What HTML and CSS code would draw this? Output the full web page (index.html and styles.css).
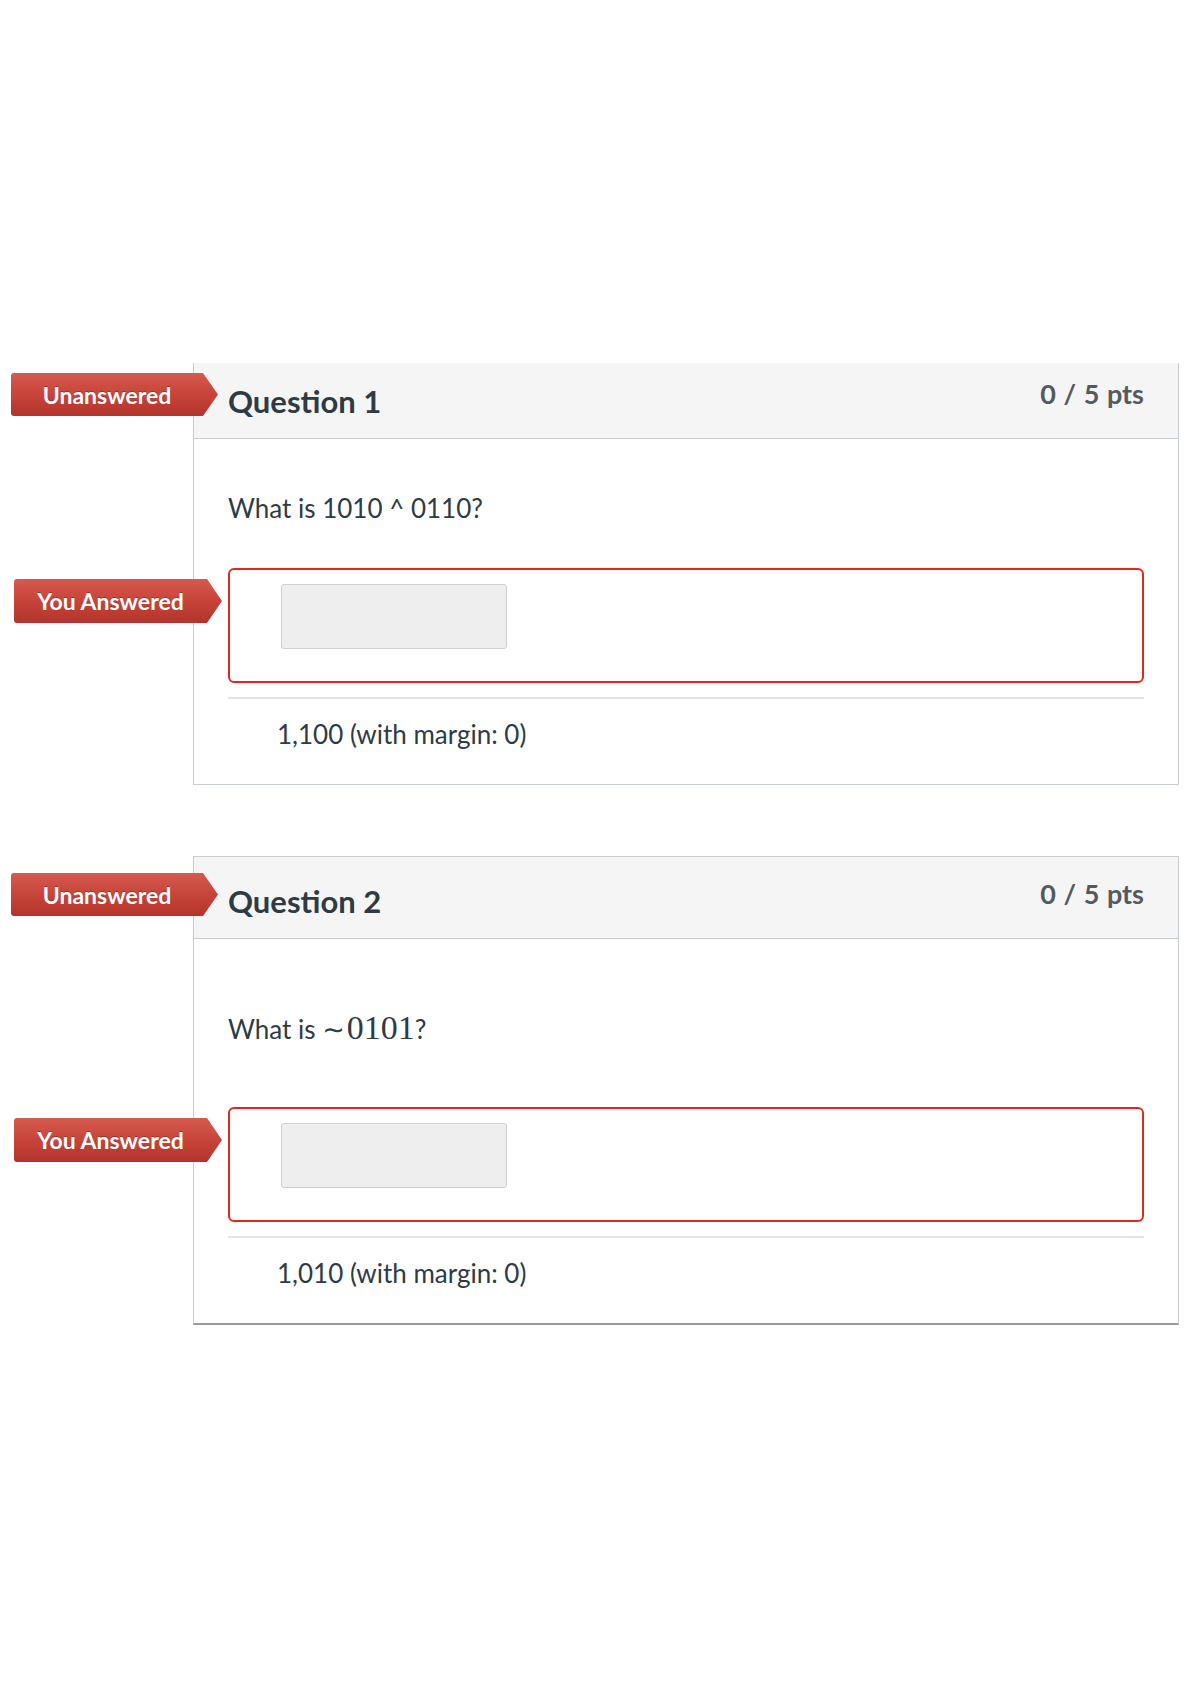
FILE: index.html
```html
<!DOCTYPE html>
<html lang="en">
<head>
<meta charset="utf-8">
<title>Quiz results</title>
<link rel="stylesheet" href="styles.css">
</head>
<body>
<main class="quiz">
  <section class="q-card q-card--first">
    <header class="q-header">
      <span class="badge badge--status">Unanswered</span>
      <h2 class="q-title">Question 1</h2>
      <div class="q-pts">0 / 5 pts</div>
    </header>
    <div class="q-body">
      <p class="q-text">What is 1010 ^ 0110?</p>
      <div class="answer-box">
        <span class="badge badge--answer">You Answered</span>
        <div class="answer-input"></div>
      </div>
      <div class="q-sep"></div>
      <p class="q-correct">1,100 (with margin: 0)</p>
    </div>
  </section>

  <section class="q-card q-card--last">
    <header class="q-header">
      <span class="badge badge--status">Unanswered</span>
      <h2 class="q-title">Question 2</h2>
      <div class="q-pts">0 / 5 pts</div>
    </header>
    <div class="q-body">
      <p class="q-text">What is <span class="math"><span class="math-op">∼</span>0101</span>?</p>
      <div class="answer-box">
        <span class="badge badge--answer">You Answered</span>
        <div class="answer-input"></div>
      </div>
      <div class="q-sep"></div>
      <p class="q-correct">1,010 (with margin: 0)</p>
    </div>
  </section>
</main>
</body>
</html>
```

FILE: styles.css
```css
html, body {
  margin: 0;
  padding: 0;
  background: #ffffff;
}

body {
  font-family: Lato, "Open Sans", "Liberation Sans", sans-serif;
  color: #2d3b45;
}

.quiz {
  padding-top: 363px;
  padding-left: 193px;
  width: 986px;
}

.q-card {
  border: 1px solid #c7cdd1;
  background: #fff;
}

.q-card--first {
  border-top: none;
}

.q-card + .q-card {
  margin-top: 71px;
}

.q-card--last {
  border-bottom: 2px solid #9a9a9a;
}

.q-header {
  position: relative;
  display: flex;
  justify-content: space-between;
  align-items: flex-start;
  background: #f5f5f5;
  border-bottom: 1px solid #c7cdd1;
  padding: 26px 34px 19px 34px;
}

.q-card--first .q-header {
  padding-top: 20px;
}

.q-title {
  margin: 0;
  font-size: 31px;
  line-height: 36px;
  font-weight: 700;
  color: #2d3b45;
}

.q-pts {
  font-size: 27px;
  line-height: 22px;
  font-weight: 700;
  word-spacing: 1px;
  color: #555a5f;
}

.badge {
  position: absolute;
  box-sizing: border-box;
  display: flex;
  align-items: center;
  justify-content: center;
  color: #fff;
  font-weight: 700;
  font-size: 23px;
  text-shadow: 0 -1px 0 rgba(0, 0, 0, 0.25);
  background: linear-gradient(to bottom, #d65a4f 0%, #c7443a 50%, #b3342b 100%);
  border-radius: 3px 0 0 3px;
}

.badge--status {
  left: -183px;
  bottom: 22px;
  width: 207px;
  height: 43px;
  padding-right: 15px;
  clip-path: polygon(0 0, 192px 0, 100% 50%, 192px 100%, 0 100%);
}

.badge--answer {
  left: -216px;
  top: 9px;
  width: 208px;
  height: 44px;
  padding-right: 15px;
  clip-path: polygon(0 0, 193px 0, 100% 50%, 193px 100%, 0 100%);
}

.q-body {
  padding: 0 34px 34px 34px;
}

.q-text {
  margin: 51px 0 0 0;
  font-size: 26px;
  line-height: 36px;
}

.math {
  display: inline-block;
  padding: 20px 0 17px 0;
  font-family: "Liberation Serif", "DejaVu Serif", serif;
  font-size: 34px;
}

.math-op {
  font-family: "DejaVu Sans", sans-serif;
  font-size: 27px;
  margin: 0 2px 0 0;
  color: #2d3b45;
}

.answer-box {
  position: relative;
  box-sizing: border-box;
  margin-top: 42px;
  height: 115px;
  border: 2px solid #e4261b;
  border-radius: 6px;
  padding: 14px 0 0 51px;
}

.answer-input {
  box-sizing: border-box;
  width: 226px;
  height: 65px;
  background: #eeeeee;
  border: 1px solid #cfcfcf;
  border-radius: 3px;
}

.q-sep {
  margin-top: 14px;
  height: 2px;
  background: #e3e3e3;
}

.q-correct {
  margin: 19px 0 0 0;
  padding-left: 49px;
  font-size: 26px;
  line-height: 32px;
}
```
